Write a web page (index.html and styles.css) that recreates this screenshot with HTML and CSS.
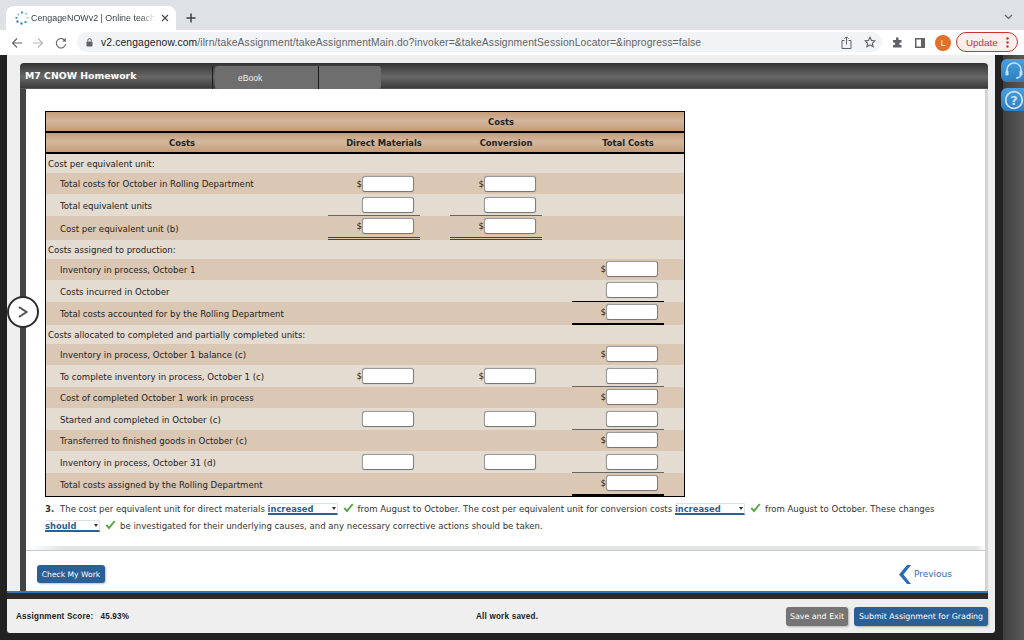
FILE: index.html
```html
<!DOCTYPE html>
<html lang="en">
<head>
<meta charset="utf-8">
<title>CengageNOWv2 | Online teaching</title>
<link rel="stylesheet" href="styles.css">
</head>
<body>
<div class="app">
  <header class="browser">
    <div class="tabstrip">
      <div class="tab">
        <svg class="favicon" width="14" height="14" viewBox="0 0 14 14"><g fill="#3d8fc9"><rect x="6" y="0.5" width="2" height="2" /><rect x="10" y="2" width="2" height="1.5" fill="#8fc3e3"/><rect x="11.5" y="6" width="2" height="1.5" fill="#9fcbe6"/><rect x="9.5" y="10" width="2" height="2" fill="#3d8fc9"/><rect x="5.5" y="11.5" width="2" height="2" fill="#1d6fa8"/><rect x="1.5" y="9.5" width="2" height="2" fill="#1d6fa8"/><rect x="0.5" y="6" width="2" height="1.5" fill="#2b7fb8"/><rect x="2.5" y="2.5" width="1.5" height="2" fill="#7db8dc"/></g></svg>
        <span class="tab-title">CengageNOWv2 | Online teach</span>
        <svg class="tab-close" width="8" height="8" viewBox="0 0 8 8"><path d="M1 1l6 6M7 1l-6 6" stroke="#45484d" stroke-width="1.1" fill="none"/></svg>
      </div>
      <svg class="newtab" width="10" height="10" viewBox="0 0 10 10"><path d="M5 0.5v9M0.5 5h9" stroke="#3c4043" stroke-width="1.5" fill="none"/></svg>
      <svg class="tabmenu" width="9" height="6" viewBox="0 0 9 6"><path d="M1 1l3.5 3.5L8 1" stroke="#5f6368" stroke-width="1.2" fill="none"/></svg>
    </div>
    <div class="toolbar">
      <svg class="nav" width="12" height="12" viewBox="0 0 12 12"><path d="M11 6H1.5M6 1.5L1.5 6 6 10.5" stroke="#5f6368" stroke-width="1.1" fill="none"/></svg>
      <svg class="nav" width="12" height="12" viewBox="0 0 12 12"><path d="M1 6h9.5M6 1.5L10.5 6 6 10.5" stroke="#b5b8bc" stroke-width="1.1" fill="none"/></svg>
      <svg class="nav" width="12" height="12" viewBox="0 0 12 12"><path d="M10.3 4.2A4.7 4.7 0 1 0 10.7 7" stroke="#5f6368" stroke-width="1.1" fill="none"/><path d="M10.8 1v3.6H7.2z" fill="#5f6368"/></svg>
      <div class="omnibox">
        <svg class="lock" width="7" height="9" viewBox="0 0 7 9"><rect x="0.5" y="3.5" width="6" height="5" rx="0.8" fill="#5f6368"/><path d="M1.8 3.5V2.3a1.7 1.7 0 0 1 3.4 0v1.2" stroke="#5f6368" fill="none"/></svg>
        <span class="url"><span class="host">v2.cengagenow.com</span>/ilrn/takeAssignment/takeAssignmentMain.do?invoker=&amp;takeAssignmentSessionLocator=&amp;inprogress=false</span>
        <svg class="omni-icon" width="11" height="13" viewBox="0 0 11 13"><path d="M3.5 4.5H1v8h9v-8H7.5M5.5 8.5V1M3.5 2.8l2-2 2 2" stroke="#5f6368" fill="none"/></svg>
        <svg class="omni-icon" width="12" height="12" viewBox="0 0 12 12"><path d="M6 1.2l1.5 3.2 3.4.4-2.5 2.4.7 3.5L6 9l-3.1 1.7.7-3.5L1.1 4.8l3.4-.4z" stroke="#5f6368" stroke-width="1.1" fill="none"/></svg>
      </div>
      <svg class="tool-icon" width="11" height="11" viewBox="0 0 11 11"><path d="M4 1.5a1.3 1.3 0 0 1 2.6 0V3h2.9v2.4H8.6a1.3 1.3 0 0 0 0 2.6h.9v2.5H1V8h.9a1.3 1.3 0 0 0 0-2.6H1V3h3z" fill="#5f6368"/></svg>
      <svg class="tool-icon" width="10" height="10" viewBox="0 0 10 10"><rect width="10" height="10" fill="#5f6368"/><rect x="1.5" y="1.5" width="4.5" height="7" fill="#fff"/></svg>
      <span class="avatar">L</span>
      <span class="update">Update<svg width="3" height="11" viewBox="0 0 3 11"><g fill="#c5352c"><circle cx="1.5" cy="1.5" r="1.2"/><circle cx="1.5" cy="5.5" r="1.2"/><circle cx="1.5" cy="9.5" r="1.2"/></g></svg></span>
    </div>
  </header>

  <div class="page">
    <div class="rail-left"></div>
    <main class="panel">
      <div class="work">
        <div class="work-head">
          <h1 class="work-title">M7 CNOW Homework</h1>
          <nav class="work-tabs">
            <span class="work-tab">eBook</span>
            <span class="work-tab blank"></span>
          </nav>
        </div>
        <div class="work-body">
          <div class="scroll">
            <table class="sheet">
              <colgroup><col class="c-label"><col class="c-mid"><col class="c-mid"><col class="c-last"></colgroup>
              <thead>
                <tr class="head-a"><th colspan="4"><span class="span-head">Costs</span></th></tr>
                <tr class="head-b"><th class="pr">Costs</th><th class="pr">Direct Materials</th><th class="pr">Conversion</th><th>Total Costs</th></tr>
              </thead>
              <tbody>
                <tr class="lt h19"><td class="sec" colspan="4">Cost per equivalent unit:</td></tr>
                <tr class="dk h21"><td class="sub">Total costs for October in Rolling Department</td>
                  <td><div class="amt low"><span class="cur">$</span><input class="box"></div></td>
                  <td><div class="amt low"><span class="cur">$</span><input class="box"></div></td><td></td></tr>
                <tr class="lt h22"><td class="sub">Total equivalent units</td>
                  <td><div class="amt low rule"><input class="box"></div></td>
                  <td><div class="amt low rule"><input class="box"></div></td><td></td></tr>
                <tr class="dk h24"><td class="sub">Cost per equivalent unit (b)</td>
                  <td><div class="amt dbl"><span class="cur">$</span><input class="box"></div></td>
                  <td><div class="amt dbl"><span class="cur">$</span><input class="box"></div></td><td></td></tr>
                <tr class="lt h19"><td class="sec" colspan="4">Costs assigned to production:</td></tr>
                <tr class="dk h21"><td class="sub">Inventory in process, October 1</td><td></td><td></td>
                  <td><div class="amt"><span class="cur">$</span><input class="box"></div></td></tr>
                <tr class="lt h22"><td class="sub">Costs incurred in October</td><td></td><td></td>
                  <td><div class="amt black"><input class="box"></div></td></tr>
                <tr class="dk h23"><td class="sub">Total costs accounted for by the Rolling Department</td><td></td><td></td>
                  <td><div class="amt total"><span class="cur">$</span><input class="box"></div></td></tr>
                <tr class="lt h19"><td class="sec" colspan="4">Costs allocated to completed and partially completed units:</td></tr>
                <tr class="dk h21"><td class="sub">Inventory in process, October 1 balance (c)</td><td></td><td></td>
                  <td><div class="amt"><span class="cur">$</span><input class="box"></div></td></tr>
                <tr class="lt h22"><td class="sub">To complete inventory in process, October 1 (c)</td>
                  <td><div class="amt low"><span class="cur">$</span><input class="box"></div></td>
                  <td><div class="amt low"><span class="cur">$</span><input class="box"></div></td>
                  <td><div class="amt low rule"><input class="box"></div></td></tr>
                <tr class="dk h21"><td class="sub">Cost of completed October 1 work in process</td><td></td><td></td>
                  <td><div class="amt"><span class="cur">$</span><input class="box"></div></td></tr>
                <tr class="lt h22"><td class="sub">Started and completed in October (c)</td>
                  <td><div class="amt low"><input class="box"></div></td>
                  <td><div class="amt low"><input class="box"></div></td>
                  <td><div class="amt low rule"><input class="box"></div></td></tr>
                <tr class="dk h21"><td class="sub">Transferred to finished goods in October (c)</td><td></td><td></td>
                  <td><div class="amt"><span class="cur">$</span><input class="box"></div></td></tr>
                <tr class="lt h22"><td class="sub">Inventory in process, October 31 (d)</td>
                  <td><div class="amt low"><input class="box"></div></td>
                  <td><div class="amt low"><input class="box"></div></td>
                  <td><div class="amt low rule"><input class="box"></div></td></tr>
                <tr class="dk h23"><td class="sub">Total costs assigned by the Rolling Department</td><td></td><td></td>
                  <td><div class="amt total"><span class="cur">$</span><input class="box"></div></td></tr>
              </tbody>
            </table>
            <p class="question"><b class="qnum">3.</b>The cost per equivalent unit for direct materials <span class="pick w-a"><select><option>increased</option></select></span><svg class="tick" width="11" height="10" viewBox="0 0 11 10"><path d="M0.5 5.5l1.6-1.3 1.8 2.2L9 .5l1.5 1L4 9.5z" fill="#5aa54a"/></svg>from August to October. The cost per equivalent unit for conversion costs <span class="pick w-a"><select><option>increased</option></select></span><svg class="tick" width="11" height="10" viewBox="0 0 11 10"><path d="M0.5 5.5l1.6-1.3 1.8 2.2L9 .5l1.5 1L4 9.5z" fill="#5aa54a"/></svg>from August to October. These changes<br><span class="pick w-b"><select><option>should</option></select></span><svg class="tick" width="11" height="10" viewBox="0 0 11 10"><path d="M0.5 5.5l1.6-1.3 1.8 2.2L9 .5l1.5 1L4 9.5z" fill="#5aa54a"/></svg>be investigated for their underlying causes, and any necessary corrective actions should be taken.</p>
          </div>
          <div class="divider"></div>
          <div class="actions">
            <button class="btn blue check">Check My Work</button>
            <a class="prev"><svg width="12" height="19" viewBox="0 0 12 19"><path d="M8 0L0 9.5 8 19h4L4.5 9.5 12 0z" fill="#2a6db5"/></svg>Previous</a>
          </div>
        </div>
      </div>
      <div class="edge"></div>
      <footer class="foot">
        <div class="score"><b>Assignment Score:</b><b>45.93%</b></div>
        <b class="saved">All work saved.</b>
        <div class="foot-btns">
          <button class="btn grey">Save and Exit</button>
          <button class="btn blue">Submit Assignment for Grading</button>
        </div>
      </footer>
    </main>
    <aside class="rail-right">
      <div class="help"><svg width="20" height="20" viewBox="0 0 20 20"><path d="M3 12V9a7 7 0 0 1 14 0v3M17 12c0 3-2 5-5 5" stroke="#c9dff0" stroke-width="1.6" fill="none"/><rect x="1.5" y="9.5" width="3" height="5" rx="1.2" fill="#c9dff0"/><rect x="15.5" y="9.5" width="3" height="5" rx="1.2" fill="#c9dff0"/></svg></div>
      <div class="help"><svg width="20" height="20" viewBox="0 0 20 20"><circle cx="10" cy="10" r="8.3" stroke="#c9dff0" stroke-width="1.8" fill="none"/><text x="10" y="14.6" text-anchor="middle" class="help-q">?</text></svg></div>
    </aside>
    <button class="toggle"><svg width="10" height="12" viewBox="0 0 10 12"><path d="M1 1l7.5 5L1 11" stroke="#555" stroke-width="2" fill="none"/></svg></button>
  </div>
</div>
</body>
</html>
```

FILE: styles.css
```css
* { box-sizing: border-box; }
html, body { margin: 0; padding: 0; height: 100%; overflow: hidden; }
body { font-family: "DejaVu Sans", Verdana, sans-serif; background: #222; color: #222; }
.app { width: 1024px; height: 640px; display: flex; flex-direction: column; }

/* browser chrome */
.browser { height: 55px; background: #fff; font-family: "Liberation Sans", Arial, sans-serif; }
.tabstrip { height: 30px; background: #dee1e6; display: flex; align-items: flex-end; padding-left: 6px; }
.tab { width: 170px; height: 24px; background: #fff; border-radius: 8px 8px 0 0; display: flex; align-items: center; padding-left: 9px; }
.favicon { flex: none; }
.tab-title { width: 124px; margin-left: 2px; font-size: 8.9px; color: #3c4043; white-space: nowrap; overflow: hidden; -webkit-mask-image: linear-gradient(90deg, #000 88%, transparent 100%); mask-image: linear-gradient(90deg, #000 88%, transparent 100%); }
.tab-close { margin-left: 6px; flex: none; }
.newtab { margin: 0 0 7px 10px; }
.tabmenu { margin: 0 11px 10px auto; }
.toolbar { height: 25px; display: flex; align-items: center; padding-left: 11px; }
.nav { margin-right: 9px; flex: none; }
.nav:nth-child(2) { margin-right: 11px; }
.nav:nth-child(3) { margin-right: 10px; }
.omnibox { width: 805px; height: 20px; background: #f1f3f4; border-radius: 10px; display: flex; align-items: center; padding-left: 9px; margin-top: -1px; }
.lock { flex: none; }
.url { margin-left: 8px; font-size: 10.3px; color: #5f6368; white-space: nowrap; letter-spacing: 0.14px; width: 740px; flex: none; }
.host { color: #202124; }
.omni-icon { flex: none; margin-right: 12px; }
.tool-icon { flex: none; margin-left: 10px; margin-right: 2px; }
.avatar { width: 16px; height: 16px; border-radius: 50%; background: #e0702a; color: #fff; font-size: 8.5px; display: flex; align-items: center; justify-content: center; margin-left: 8px; flex: none; }
.update { width: 62px; height: 20px; margin-left: 5px; border: 1px solid #c5352c; border-radius: 10px; background: #fbeeed; color: #c5352c; font-size: 9.8px; display: flex; align-items: center; justify-content: space-between; padding: 0 8px 0 9px; margin-top: -1px; flex: none; }

/* page frame */
.page { flex: 1; display: flex; position: relative; background: #222; }
.rail-left { width: 7px; flex: none; }
.panel { width: 988px; height: 578px; flex: none; background: #efefef; border-radius: 0 0 3px 3px; display: flex; flex-direction: column; }
.rail-right { flex: 1; margin-left: 8px; background: linear-gradient(90deg, #3f3f3f, #5a5a5a); display: flex; flex-direction: column; gap: 6px; padding-top: 4px; }
.help { width: 24px; height: 23px; margin-left: -2px; background: linear-gradient(180deg, #4aa0de, #2b7ec0); border-radius: 6px 0 0 6px; display: flex; align-items: center; justify-content: center; flex: none; padding-left: 1px; }
.help-q { font: bold 13px "DejaVu Sans", sans-serif; fill: #c9dff0; }
.toggle { position: absolute; left: 7px; top: 241px; width: 32px; height: 32px; padding: 0; border-radius: 50%; background: #fff; border: 2px solid #2d2d2d; display: flex; align-items: center; justify-content: center; }

.work { padding: 8px 7px 0 13px; }
.work-head { height: 26px; border-radius: 4px 4px 0 0; background: linear-gradient(180deg, #333 0%, #676767 55%, #3d3d3d 100%); display: flex; border-bottom: 1px solid #555; }
.work-title { width: 192px; margin: 0; padding: 0 0 0 5px; font-size: 9.35px; line-height: 26px; color: #fff; font-weight: bold; white-space: nowrap; }
.work-tabs { display: flex; margin-top: 3px; height: 23px; border-left: 1px solid #1c1c1c; padding-left: 2px; }
.work-tab { width: 104px; background: #6e6e6e; color: #eee; font-family: "Liberation Sans", Arial, sans-serif; font-size: 8.6px; line-height: 24px; padding-left: 23px; border-right: 1px solid #1c1c1c; border-radius: 3px 0 0 3px; }
.work-tab.blank { width: 62px; border-right: 0; border-radius: 0 3px 3px 0; }
.work-body { height: 502px; background: #fff; border-left: 6px solid #444; border-right: 3px solid #d4d4d4; }
.scroll { height: 457px; padding: 22px 0 0 19px; }

/* table */
.sheet { width: 640px; table-layout: fixed; border-collapse: separate; border-spacing: 0; border: 1px solid #000; font-size: 8.6px; color: #222; }
.c-label { width: 282px; }
.c-mid { width: 122px; }
.c-last { width: 112px; }
.sheet th { padding: 0; font-size: 8.4px; font-weight: bold; text-align: center; color: #222; background: linear-gradient(180deg, #c59d78 0%, #d4b89e 45%, #c49c77 100%); }
.head-a th { height: 21px; border-bottom: 2px solid #000; }
.head-b th { height: 21px; border-bottom: 2px solid #000; }
.sheet th.pr { padding-right: 10px; }
.span-head { display: block; padding-left: 272px; }
.sheet td { padding: 0; vertical-align: top; }
.lt td { background: #e4dbd1; }
.dk td { background: #dbc8b4; }
.h19 td { height: 19px; }
.h21 td { height: 21px; }
.h22 td { height: 22px; }
.h23 td { height: 23px; }
.h24 td { height: 24px; }
.sheet td.sec, .sheet td.sub { vertical-align: middle; white-space: nowrap; }
.sheet td.sec { padding-left: 2px; }
.sheet td.sub { padding: 1px 0 0 14px; }
.amt { width: 92px; padding: 2px 6px 0 0; display: flex; justify-content: flex-end; align-items: flex-start; }
.amt.low { padding-top: 3px; }
.amt.rule { padding-bottom: 2px; border-bottom: 1px solid #666; }
.amt.dbl { padding-bottom: 3px; border-bottom: 3px double #444; }
.amt.black { padding-bottom: 3px; border-bottom: 1px solid #000; }
.amt.total { padding-bottom: 3px; border-bottom: 2px solid #000; }
.cur { font-size: 8.6px; line-height: 16px; color: #222; }
.box { width: 52px; height: 16px; padding: 0; background: #fff; border: 1px solid #9a9a9a; border-bottom-color: #777; border-right-color: #808080; border-radius: 3px; flex: none; box-shadow: 0 0 1px rgba(0,0,0,.25); }

/* question */
.question { margin: 4px 0 0; font-size: 8.55px; line-height: 17px; color: #333; white-space: nowrap; }
.qnum { display: inline-block; width: 15px; color: #333; }
.pick { display: inline-block; position: relative; height: 12px; overflow: hidden; vertical-align: -3px; }
.w-a { width: 70px; }
.w-b { width: 55px; }
.pick select { appearance: none; display: block; width: 100%; height: 12px; padding: 0; margin: 0; border: 0; border-top: 1px solid #dde2e6; border-right: 1px solid #dde2e6; border-bottom: 2px solid #2a5f97; border-radius: 2px 2px 0 0; background: #fff; color: #2a5f97; font: bold 8.35px "DejaVu Sans", sans-serif; }
.pick::after { content: ""; position: absolute; right: 2px; top: 4px; border: 2.5px solid transparent; border-top: 3px solid #333; border-bottom: 0; }
.tick { margin: 0 4px 0 5px; vertical-align: -1px; }

.divider { height: 5px; background: linear-gradient(0deg, #c9c9c9 0, #c9c9c9 1px, transparent 1px), linear-gradient(90deg, #fff 0, #e1e5e8 38px, #e1e5e8 950px, #fff 100%); }
.actions { height: 40px; display: flex; align-items: flex-start; justify-content: space-between; padding: 14px 33px 0 11px; }
.btn { border: 0; border-radius: 3px; color: #fff; font-family: "DejaVu Sans", sans-serif; padding: 0; white-space: nowrap; }
.blue { background: #2a5f97; }
.grey { background: #757575; }
.check { width: 68px; height: 18px; font-size: 7.6px; box-shadow: 1px 1px 2px rgba(0,0,0,.25); }
.prev { display: flex; align-items: center; gap: 3px; color: #2a6db5; font-size: 9px; height: 18px; }
.edge { height: 8px; margin-right: 7px; background: #2b2b2b; border-top: 2px solid #3a76ae; flex: none; }
.foot { height: 34px; display: flex; align-items: center; font: 8.15px "Liberation Sans", Arial, sans-serif; letter-spacing: 0.2px; color: #222; padding-left: 9px; }
.score { width: 460px; display: flex; gap: 7px; }
.saved { width: 310px; }
.foot-btns { display: flex; gap: 6px; }
.foot-btns .btn { height: 19px; font-size: 7.9px; letter-spacing: 0; box-shadow: 1px 1px 2px rgba(0,0,0,.25); }
.foot-btns .grey { width: 62px; }
.foot-btns .blue { width: 134px; }
```
